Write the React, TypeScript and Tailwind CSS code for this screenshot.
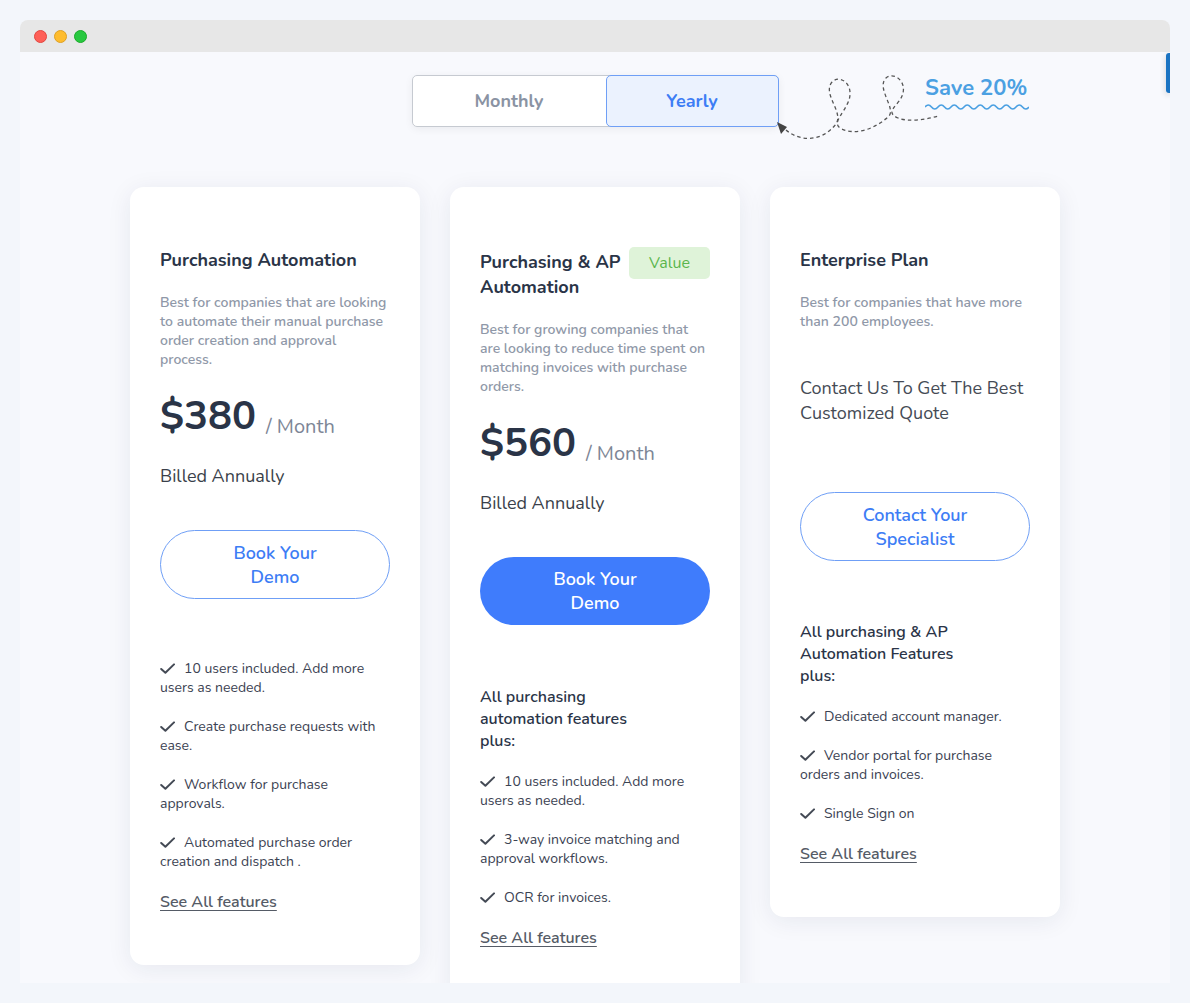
import React from "react";

const font = { fontFamily: "Nunito, Lato, 'Noto Sans', sans-serif" };

function Check() {
  return (
    <svg width="15" height="11" viewBox="0 0 15 11" className="inline-block align-[-1px] mr-[9px]">
      <path d="M1.2 6 L5.4 9.8 L14 1.4" fill="none" stroke="#444a55" strokeWidth="2" strokeLinecap="round" strokeLinejoin="round" />
    </svg>
  );
}

function Feature({ lines }: { lines: string[] }) {
  return (
    <li className="text-[14px] leading-[19px] text-[#3b4252]">
      <Check />
      {lines.map((l, i) => (
        <React.Fragment key={i}>
          {i > 0 && <br />}
          {l}
        </React.Fragment>
      ))}
    </li>
  );
}

function Lines({ lines }: { lines: string[] }) {
  return (
    <>
      {lines.map((l, i) => (
        <span key={i} className="block whitespace-nowrap">
          {l}
        </span>
      ))}
    </>
  );
}

function Price({ amount }: { amount: string }) {
  return (
    <div className="mt-[23px] flex items-baseline">
      <span className="text-[40px] leading-[48px] font-bold text-[#2a3447]">{amount}</span>
      <span className="ml-[10px] text-[20px] text-[#7d8696] translate-y-[4px]">/ Month</span>
    </div>
  );
}

function SeeAll() {
  return (
    <a className="mt-[20px] block text-[16px] leading-[22px] font-semibold text-[#555b66] underline underline-offset-[3px]">
      See All features
    </a>
  );
}

export default function App() {
  return (
    <div className="w-[1190px] h-[1003px] bg-[#f3f6fb] pt-5 px-5 overflow-hidden" style={font}>
      <div className="relative h-[963px] rounded-t-lg overflow-hidden bg-[#f8f9fd]">
        {/* title bar */}
        <div className="h-8 bg-[#e7e7e7] flex items-center pl-[14px] gap-[7px]">
          <span className="w-[13px] h-[13px] rounded-full bg-[#fe5f57] border border-[#e2463f]" />
          <span className="w-[13px] h-[13px] rounded-full bg-[#febc2e] border border-[#dea123]" />
          <span className="w-[13px] h-[13px] rounded-full bg-[#28c840] border border-[#1aab29]" />
        </div>

        {/* blue side tab */}
        <div className="absolute right-0 top-[33px] w-[4px] h-[40px] rounded-l-[3px] bg-[#1a73c2] shadow-[0_2px_6px_rgba(0,0,0,0.2)]" />

        {/* toggle */}
        <div className="mt-[23px] flex justify-center">
          <div className="relative flex h-[52px] w-[367px] rounded-[5px] border border-[#c6cad1] bg-white shadow-[0_2px_8px_rgba(0,0,0,0.06)]">
            <div className="w-[193px] flex items-center justify-center text-[18px] font-bold text-[#8a93a3]">Monthly</div>
            <div className="flex-1 -my-px -mr-px flex items-center justify-center rounded-[5px] border border-[#6f9ff6] bg-[#ebf2fe] text-[18px] font-bold text-[#3d7df5]">
              Yearly
            </div>
            {/* dashed curve */}
            <svg className="absolute left-[361px] top-[-4px]" width="170" height="80" viewBox="0 0 170 80">
              <path
                d="M12 58 C26 70 48 70 62 52 C70 40 48 22 58 10 C66 2 80 12 75 28 C70 42 58 50 66 56 C80 64 100 58 115 44 C122 36 102 16 112 6 C120 -1 134 10 128 24 C124 34 110 40 124 46 C134 50 150 48 164 44"
                fill="none"
                stroke="#555"
                strokeWidth="1.3"
                strokeDasharray="3.5 3"
              />
              <polygon points="3,50 13,55 7,62" fill="#444" />
            </svg>
          </div>
          <div className="absolute left-[905px] top-[55px] flex flex-col">
            <span className="text-[22px] font-bold text-[#4ba0e2] leading-[27px]">Save 20%</span>
            <svg width="104" height="8" viewBox="0 0 104 8" className="mt-[1px]">
              <path
                d="M0 4 Q 3.25 0 6.5 4 T 13 4 T 19.5 4 T 26 4 T 32.5 4 T 39 4 T 45.5 4 T 52 4 T 58.5 4 T 65 4 T 71.5 4 T 78 4 T 84.5 4 T 91 4 T 97.5 4 T 104 4"
                fill="none"
                stroke="#4ba0e2"
                strokeWidth="1.6"
              />
            </svg>
          </div>
        </div>

        {/* cards */}
        <div className="mt-[60px] flex justify-center items-start gap-[30px]">
          {/* card 1 */}
          <div className="w-[290px] rounded-[14px] bg-white px-[30px] pt-[61px] pb-[52px] shadow-[0_4px_24px_rgba(30,40,80,0.08)]">
            <h3 className="text-[18px] leading-[25px] font-bold text-[#2a3447]">Purchasing Automation</h3>
            <p className="mt-[20px] text-[14px] leading-[19px] font-semibold text-[#8f98a8]">
              <Lines lines={["Best for companies that are looking", "to automate their manual purchase", "order creation and approval", "process."]} />
            </p>
            <Price amount="$380" />
            <div className="mt-[24px] text-[18px] leading-[24px] text-[#3a3f4a]">Billed Annually</div>
            <button className="mt-[42px] w-full h-[69px] rounded-full border border-[#6f9ff6] text-[18px] leading-[24px] font-semibold text-[#3d7df5]">
              Book Your
              <br />
              Demo
            </button>
            <ul className="mt-[60px] flex flex-col gap-[20px]">
              <Feature lines={["10 users included. Add more", "users as needed."]} />
              <Feature lines={["Create purchase requests with", "ease."]} />
              <Feature lines={["Workflow for purchase", "approvals."]} />
              <Feature lines={["Automated purchase order", "creation and dispatch ."]} />
            </ul>
            <SeeAll />
          </div>

          {/* card 2 */}
          <div className="w-[290px] rounded-[14px] bg-white px-[30px] pt-[59px] pb-[53px] shadow-[0_4px_24px_rgba(30,40,80,0.08)]">
            <div className="flex items-start justify-between">
              <h3 className="mt-[4px] text-[18px] leading-[25px] font-bold text-[#2a3447]">
                Purchasing &amp; AP
                <br />
                Automation
              </h3>
              <span className="mt-[1px] h-[32px] w-[81px] rounded-[5px] bg-[#dff3d9] flex items-center justify-center text-[16px] text-[#5ab64c]">
                Value
              </span>
            </div>
            <p className="mt-[20px] text-[14px] leading-[19px] font-semibold text-[#8f98a8]">
              <Lines lines={["Best for growing companies that", "are looking to reduce time spent on", "matching invoices with purchase", "orders."]} />
            </p>
            <Price amount="$560" />
            <div className="mt-[24px] text-[18px] leading-[24px] text-[#3a3f4a]">Billed Annually</div>
            <button className="mt-[42px] w-full h-[68px] rounded-full bg-[#3f7cfc] text-[18px] leading-[24px] font-semibold text-white">
              Book Your
              <br />
              Demo
            </button>
            <div className="mt-[61px] text-[16px] leading-[22px] font-semibold text-[#2a3447]">
              <Lines lines={["All purchasing", "automation features", "plus:"]} />
            </div>
            <ul className="mt-[20px] flex flex-col gap-[20px]">
              <Feature lines={["10 users included. Add more", "users as needed."]} />
              <Feature lines={["3-way invoice matching and", "approval workflows."]} />
              <Feature lines={["OCR for invoices."]} />
            </ul>
            <SeeAll />
          </div>

          {/* card 3 */}
          <div className="w-[290px] rounded-[14px] bg-white px-[30px] pt-[61px] pb-[52px] shadow-[0_4px_24px_rgba(30,40,80,0.08)]">
            <h3 className="text-[18px] leading-[25px] font-bold text-[#2a3447]">Enterprise Plan</h3>
            <p className="mt-[20px] text-[14px] leading-[19px] font-semibold text-[#8f98a8]">
              <Lines lines={["Best for companies that have more", "than 200 employees."]} />
            </p>
            <div className="mt-[45px] text-[18px] leading-[25px] text-[#454b55]">
              <Lines lines={["Contact Us To Get The Best", "Customized Quote"]} />
            </div>
            <button className="mt-[66px] w-full h-[69px] rounded-full border border-[#6f9ff6] text-[18px] leading-[24px] font-semibold text-[#3d7df5]">
              Contact Your
              <br />
              Specialist
            </button>
            <div className="mt-[60px] text-[16px] leading-[22px] font-semibold text-[#2a3447]">
              <Lines lines={["All purchasing & AP", "Automation Features", "plus:"]} />
            </div>
            <ul className="mt-[20px] flex flex-col gap-[20px]">
              <Feature lines={["Dedicated account manager."]} />
              <Feature lines={["Vendor portal for purchase", "orders and invoices."]} />
              <Feature lines={["Single Sign on"]} />
            </ul>
            <SeeAll />
          </div>
        </div>
      </div>
    </div>
  );
}
